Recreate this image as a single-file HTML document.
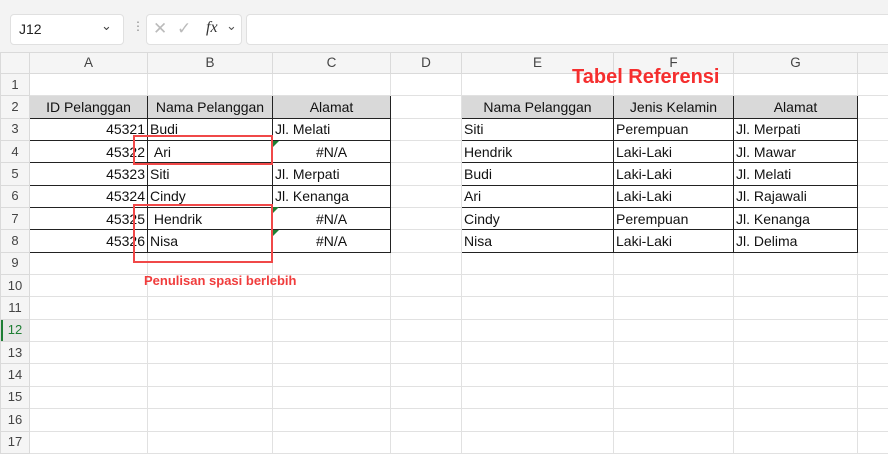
<!DOCTYPE html>
<html><head><style>
body{margin:0;width:888px;height:448px;overflow:hidden;background:#fff;font-family:"Liberation Sans",sans-serif;position:relative}
.top{position:absolute;left:0;top:0;width:888px;height:52px;background:#f3f3f3}
.box{position:absolute;background:#fff;border:1px solid #e0e0e0;border-radius:4px;height:29px;top:14px}
table{position:absolute;left:0;top:52px;border-collapse:collapse;table-layout:fixed;width:897px}
td{border:1px solid #e1e1e1;height:21.35px;padding:0 2px;font-size:14px;color:#111;white-space:nowrap;overflow:visible;line-height:20px}
tr.h td{height:20px;background:#f5f5f5;color:#444;text-align:center;font-size:13.5px;border-color:#dadada}
td.rh{background:#f5f5f5;color:#444;text-align:center;font-size:13px;border-color:#dadada;padding:0}
td.b{border:1px solid #222}
td.g{background:#d9d9d9;text-align:center}
.r{text-align:right}.c{text-align:center}
.tri{position:absolute;width:0;height:0;border-top:6px solid #1e7e34;border-right:6px solid transparent}
.red{position:absolute;border:2px solid #f04848}
</style></head><body>
<div class="top"></div>
<div class="box" style="left:10px;width:112px"><span style="position:absolute;left:8px;top:6px;font-size:14px;color:#222">J12</span><span style="position:absolute;left:90px;top:3px;font-size:13px;color:#444">⌄</span></div>
<span style="position:absolute;left:132px;top:19px;color:#888;font-size:12px">⋮</span>
<div class="box" style="left:146px;width:94px"><span style="position:absolute;left:6px;top:4px;font-size:17px;color:#bbb">✕</span><span style="position:absolute;left:30px;top:4px;font-size:17px;color:#bbb">✓</span><span style="position:absolute;left:59px;top:4px;font-size:16px;color:#333;font-style:italic;font-family:'Liberation Serif',serif">fx</span><span style="position:absolute;left:79px;top:3px;font-size:13px;color:#555">⌄</span></div>
<div class="box" style="left:246px;width:650px"></div>
<table>
<colgroup><col style="width:29px"><col style="width:118px"><col style="width:125px"><col style="width:118px"><col style="width:71px"><col style="width:152px"><col style="width:120px"><col style="width:124px"><col style="width:40px"></colgroup>
<tr class="h"><td></td><td>A</td><td>B</td><td>C</td><td>D</td><td>E</td><td>F</td><td>G</td><td></td></tr>
<tr><td class="rh">1</td><td></td><td></td><td></td><td></td><td></td><td></td><td></td><td></td></tr>
<tr><td class="rh">2</td><td class="b g">ID Pelanggan</td><td class="b g">Nama Pelanggan</td><td class="b g">Alamat</td><td></td><td class="b g">Nama Pelanggan</td><td class="b g">Jenis Kelamin</td><td class="b g">Alamat</td><td></td></tr>
<tr><td class="rh">3</td><td class="b r">45321</td><td class="b">Budi</td><td class="b">Jl. Melati</td><td></td><td class="b">Siti</td><td class="b">Perempuan</td><td class="b">Jl. Merpati</td><td></td></tr>
<tr><td class="rh">4</td><td class="b r">45322</td><td class="b">&nbsp;Ari</td><td class="b c">#N/A</td><td></td><td class="b">Hendrik</td><td class="b">Laki-Laki</td><td class="b">Jl. Mawar</td><td></td></tr>
<tr><td class="rh">5</td><td class="b r">45323</td><td class="b">Siti</td><td class="b">Jl. Merpati</td><td></td><td class="b">Budi</td><td class="b">Laki-Laki</td><td class="b">Jl. Melati</td><td></td></tr>
<tr><td class="rh">6</td><td class="b r">45324</td><td class="b">Cindy</td><td class="b">Jl. Kenanga</td><td></td><td class="b">Ari</td><td class="b">Laki-Laki</td><td class="b">Jl. Rajawali</td><td></td></tr>
<tr><td class="rh">7</td><td class="b r">45325</td><td class="b">&nbsp;Hendrik</td><td class="b c">#N/A</td><td></td><td class="b">Cindy</td><td class="b">Perempuan</td><td class="b">Jl. Kenanga</td><td></td></tr>
<tr><td class="rh">8</td><td class="b r">45326</td><td class="b">Nisa</td><td class="b c">#N/A</td><td></td><td class="b">Nisa</td><td class="b">Laki-Laki</td><td class="b">Jl. Delima</td><td></td></tr>
<tr><td class="rh">9</td><td></td><td></td><td></td><td></td><td></td><td></td><td></td><td></td></tr>
<tr><td class="rh">10</td><td></td><td></td><td></td><td></td><td></td><td></td><td></td><td></td></tr>
<tr><td class="rh">11</td><td></td><td></td><td></td><td></td><td></td><td></td><td></td><td></td></tr>
<tr><td class="rh" style="color:#1e7e34;background:#e6e6e6;box-shadow:inset 2px 0 #1e7e34">12</td><td></td><td></td><td></td><td></td><td></td><td></td><td></td><td></td></tr>
<tr><td class="rh">13</td><td></td><td></td><td></td><td></td><td></td><td></td><td></td><td></td></tr>
<tr><td class="rh">14</td><td></td><td></td><td></td><td></td><td></td><td></td><td></td><td></td></tr>
<tr><td class="rh">15</td><td></td><td></td><td></td><td></td><td></td><td></td><td></td><td></td></tr>
<tr><td class="rh">16</td><td></td><td></td><td></td><td></td><td></td><td></td><td></td><td></td></tr>
<tr><td class="rh">17</td><td></td><td></td><td></td><td></td><td></td><td></td><td></td><td></td></tr>
</table>
<div class="tri" style="left:273px;top:141px"></div>
<div class="tri" style="left:273px;top:207px"></div>
<div class="tri" style="left:273px;top:230px"></div>
<div class="red" style="left:133px;top:135px;width:136px;height:26px"></div>
<div class="red" style="left:133px;top:204px;width:136px;height:55px"></div>
<div style="position:absolute;left:144px;top:273px;color:#f03c3c;font-weight:bold;font-size:13px">Penulisan spasi berlebih</div>
<div style="position:absolute;left:572px;top:66px;color:#f52f2f;font-weight:bold;font-size:20px">Tabel Referensi</div>
</body></html>
